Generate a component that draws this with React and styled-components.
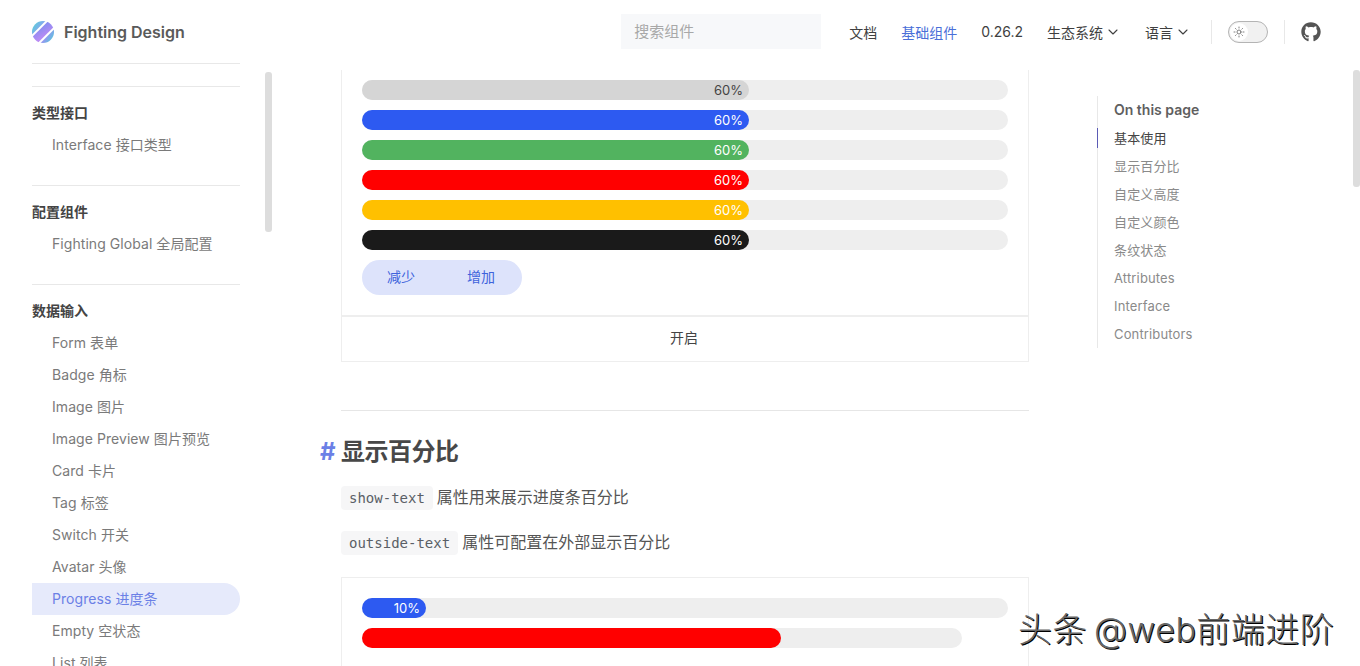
import { styled, createGlobalStyle } from "styled-components";
import { ChevronDown, Sun } from "lucide-react";
import { FaGithub } from "react-icons/fa";

const GlobalStyle = createGlobalStyle`
  html, body {
    margin: 0;
    padding: 0;
    background: #ffffff;
  }
  * {
    box-sizing: border-box;
  }
`;

const Page = styled.div`
  position: relative;
  width: 1360px;
  height: 666px;
  overflow: hidden;
  background: #ffffff;
  color: #3c3c3c;
  font-family: Inter, "Noto Sans CJK SC", sans-serif;
  font-size: 14px;
`;

const Header = styled.header`
  height: 63px;
  padding: 0 39px 0 32px;
  display: flex;
  align-items: center;
`;

const Brand = styled.div`
  display: flex;
  align-items: center;
  gap: 10px;
  font-size: 16px;
  font-weight: 600;
  color: #5a5a5a;
  margin-right: auto;
`;

const Search = styled.div`
  width: 200px;
  height: 35px;
  padding: 0 0 2px 13px;
  margin-right: 28px;
  display: flex;
  align-items: center;
  background: #f7f8fa;
  color: #a8a8a8;
  font-size: 15px;
`;

const Nav = styled.nav`
  display: flex;
  align-items: center;
  gap: 24px;
`;

const NavItem = styled.a`
  display: flex;
  align-items: center;
  gap: 2px;
  color: ${(p) => (p.$active ? "#4a6fd8" : "#3f3f3f")};
`;

const Divider = styled.span`
  width: 1px;
  height: 24px;
  background: #e8e8e8;
  margin: 0 16px 0 ${(p) => p.$before}px;
`;

const Toggle = styled.div`
  width: 40px;
  height: 22px;
  padding: 1px;
  display: flex;
  border: 1px solid #b4b4b4;
  border-radius: 11px;
  background: #f1f1f1;
`;

const Knob = styled.span`
  width: 18px;
  height: 18px;
  display: flex;
  align-items: center;
  justify-content: center;
  border-radius: 50%;
  background: #ffffff;
  color: #555555;
`;

const GithubLink = styled.a`
  display: flex;
  color: #555555;
`;

const Body = styled.div`
  height: 603px;
  display: flex;
`;

const Sidebar = styled.aside`
  width: 273px;
  flex: none;
  padding-left: 32px;
`;

const SideList = styled.div`
  width: 208px;
`;

const SideSpacer = styled.div`
  height: 23px;
  border-top: 1px solid #e8e8e8;
`;

const SideGroup = styled.section`
  padding: 10px 0 24px;
  border-top: 1px solid #e8e8e8;
`;

const SideTitle = styled.h4`
  margin: 0;
  font-size: 14px;
  line-height: 32px;
  font-weight: 600;
  color: #444444;
`;

const SideItem = styled.a`
  display: block;
  height: 32px;
  padding-left: 20px;
  line-height: 32px;
  letter-spacing: 0.06px;
  border-radius: 0 16px 16px 0;
  color: ${(p) => (p.$active ? "#6b80e6" : "#7a7a7a")};
  background: ${(p) => (p.$active ? "#e6eafb" : "transparent")};
`;

const Scrollbar = styled.div`
  position: absolute;
  width: 7px;
  border-radius: 3px;
  background: #dddddd;
  top: ${(p) => p.$top}px;
  left: ${(p) => p.$left}px;
  height: ${(p) => p.$height}px;
`;

const Main = styled.main`
  width: 688px;
  flex: none;
  margin: 7px 0 0 68px;
`;

const Card = styled.div`
  margin-top: ${(p) => (p.$clipped ? "0" : "21px")};
  border: 1px solid #eeeeee;
  border-top: ${(p) => (p.$clipped ? "none" : "1px solid #eeeeee")};
`;

const Demo = styled.div`
  display: flex;
  flex-direction: column;
  gap: 10px;
  padding: ${(p) => (p.$clipped ? "10px" : "20px")} 20px 20px;
`;

const Track = styled.div`
  width: ${(p) => p.$width || 646}px;
  height: 20px;
  border-radius: 10px;
  background: #eeeeee;
`;

const Fill = styled.div`
  width: calc(${(p) => p.$percent}% - 0.6px);
  height: 100%;
  padding-right: 6px;
  display: flex;
  align-items: center;
  justify-content: flex-end;
  border-radius: 10px;
  background: ${(p) => p.$color};
  color: ${(p) => p.$text || "#ffffff"};
  font-size: 13px;
`;

const ButtonGroup = styled.div`
  width: 160px;
  height: 35px;
  display: flex;
  border-radius: 18px;
  background: #dde3fb;
`;

const GroupButton = styled.button`
  flex: 1;
  padding: 0 2px 3px 0;
  border: none;
  background: transparent;
  color: #3f63dc;
  font: inherit;
`;

const CardFooter = styled.div`
  height: 46px;
  padding: 0 2px 4px 0;
  display: flex;
  align-items: center;
  justify-content: center;
  border-top: 2px solid #eeeeee;
  color: #444444;
`;

const Rule = styled.hr`
  margin: 48px 0 25px;
  height: 1px;
  border: none;
  background: #e6e6e6;
`;

const Heading = styled.h2`
  position: relative;
  margin: 0 0 15px;
  font-size: 24px;
  line-height: 32px;
  font-weight: 700;
  letter-spacing: -0.02em;
  color: #484848;
`;

const Anchor = styled.span`
  position: absolute;
  left: -21px;
  color: #6b80e6;
`;

const Para = styled.p`
  height: 28px;
  margin: 0 0 17px;
  font-size: 16px;
  line-height: 28px;
  color: #555555;
`;

const Code = styled.code`
  margin-right: 4px;
  padding: 4px 8px;
  border-radius: 4px;
  background: #f6f6f7;
  color: #5a5f66;
  font-family: "DejaVu Sans Mono", monospace;
  font-size: 14px;
`;

const Toc = styled.aside`
  width: 200px;
  height: 252px;
  margin: 33px 0 0 68px;
  padding-left: 16px;
  position: relative;
  border-left: 1px solid #e8e8e8;
  font-size: 13px;
`;

const TocTitle = styled.div`
  font-size: 14px;
  line-height: 28px;
  font-weight: 600;
  color: #5f5f5f;
`;

const TocItem = styled.a`
  display: block;
  line-height: 28px;
  letter-spacing: 0.15px;
  color: ${(p) => (p.$active ? "#444444" : "#8a8a8a")};
`;

const TocMarker = styled.span`
  position: absolute;
  left: -1px;
  top: 32px;
  width: 1px;
  height: 20px;
  background: #5b5bb5;
`;

const Watermark = styled.div`
  position: absolute;
  left: 1018px;
  top: 608px;
  font-size: 34px;
  line-height: 44px;
  font-weight: 300;
  letter-spacing: 0.5px;
  word-spacing: -3px;
  white-space: nowrap;
  color: #666666;
  text-shadow: 1px 1px 0 #000000;
`;

const Logo = () => (
  <svg width="22" height="22" viewBox="0 0 22 22">
    <defs>
      <clipPath id="logo-clip">
        <circle cx="11" cy="11" r="11" />
      </clipPath>
      <linearGradient id="logo-a" x1="0" y1="0" x2="1" y2="1">
        <stop offset="0" stopColor="#4fd6d2" />
        <stop offset="1" stopColor="#8ea2f2" />
      </linearGradient>
      <linearGradient id="logo-b" x1="0" y1="1" x2="1" y2="0">
        <stop offset="0" stopColor="#c58bf5" />
        <stop offset="1" stopColor="#7f8cf0" />
      </linearGradient>
      <linearGradient id="logo-c" x1="0" y1="0" x2="1" y2="1">
        <stop offset="0" stopColor="#a58cf5" />
        <stop offset="1" stopColor="#46d3d6" />
      </linearGradient>
    </defs>
    <g clipPath="url(#logo-clip)">
      <g transform="rotate(-45 11 11)">
        <rect x="-4" y="-1" width="30" height="6" fill="url(#logo-a)" />
        <rect x="-4" y="7" width="30" height="8" fill="url(#logo-b)" />
        <rect x="-4" y="17" width="30" height="6" fill="url(#logo-c)" />
      </g>
    </g>
  </svg>
);

const groups = [
  { title: "类型接口", items: ["Interface 接口类型"] },
  { title: "配置组件", items: ["Fighting Global 全局配置"] },
  {
    title: "数据输入",
    items: [
      "Form 表单",
      "Badge 角标",
      "Image 图片",
      "Image Preview 图片预览",
      "Card 卡片",
      "Tag 标签",
      "Switch 开关",
      "Avatar 头像",
      "Progress 进度条",
      "Empty 空状态",
      "List 列表",
    ],
  },
];

const bars = [
  { color: "#d5d5d5", text: "#444444" },
  { color: "#2d5af1" },
  { color: "#52b35f" },
  { color: "#ff0000" },
  { color: "#ffc000" },
  { color: "#1a1a1a" },
];

const tocItems = [
  "显示百分比",
  "自定义高度",
  "自定义颜色",
  "条纹状态",
  "Attributes",
  "Interface",
  "Contributors",
];

export default function App() {
  return (
    <Page>
      <GlobalStyle />
      <Header>
        <Brand>
          <Logo />
          Fighting Design
        </Brand>
        <Search>搜索组件</Search>
        <Nav>
          <NavItem>文档</NavItem>
          <NavItem $active>基础组件</NavItem>
          <NavItem>0.26.2</NavItem>
          <NavItem>
            生态系统
            <ChevronDown size={16} strokeWidth={1.6} />
          </NavItem>
          <NavItem>
            语言
            <ChevronDown size={16} strokeWidth={1.6} />
          </NavItem>
        </Nav>
        <Divider $before={20} />
        <Toggle>
          <Knob>
            <Sun size={12} strokeWidth={1.5} />
          </Knob>
        </Toggle>
        <Divider $before={16} />
        <GithubLink>
          <FaGithub size={20} />
        </GithubLink>
      </Header>

      <Body>
        <Sidebar>
          <SideList>
            <SideSpacer />
            {groups.map((group) => (
              <SideGroup key={group.title}>
                <SideTitle>{group.title}</SideTitle>
                {group.items.map((item) => (
                  <SideItem key={item} $active={item.startsWith("Progress")}>
                    {item}
                  </SideItem>
                ))}
              </SideGroup>
            ))}
          </SideList>
        </Sidebar>

        <Main>
          <Card $clipped>
            <Demo $clipped>
              {bars.map((bar) => (
                <Track key={bar.color}>
                  <Fill $percent={60} $color={bar.color} $text={bar.text}>
                    60%
                  </Fill>
                </Track>
              ))}
              <ButtonGroup>
                <GroupButton>减少</GroupButton>
                <GroupButton>增加</GroupButton>
              </ButtonGroup>
            </Demo>
            <CardFooter>开启</CardFooter>
          </Card>

          <Rule />
          <Heading>
            <Anchor>#</Anchor>
            显示百分比
          </Heading>
          <Para>
            <Code>show-text</Code>属性用来展示进度条百分比
          </Para>
          <Para>
            <Code>outside-text</Code>属性可配置在外部显示百分比
          </Para>

          <Card>
            <Demo>
              <Track>
                <Fill $percent={10} $color="#2d5af1">
                  10%
                </Fill>
              </Track>
              <Track $width={600}>
                <Fill $percent={70} $color="#ff0000" />
              </Track>
            </Demo>
          </Card>
        </Main>

        <Toc>
          <TocMarker />
          <TocTitle>On this page</TocTitle>
          <TocItem $active>基本使用</TocItem>
          {tocItems.map((item) => (
            <TocItem key={item}>{item}</TocItem>
          ))}
        </Toc>
      </Body>

      <Scrollbar $left={265} $top={72} $height={160} />
      <Scrollbar $left={1353} $top={70} $height={117} />
      <Watermark>头条 @web前端进阶</Watermark>
    </Page>
  );
}
